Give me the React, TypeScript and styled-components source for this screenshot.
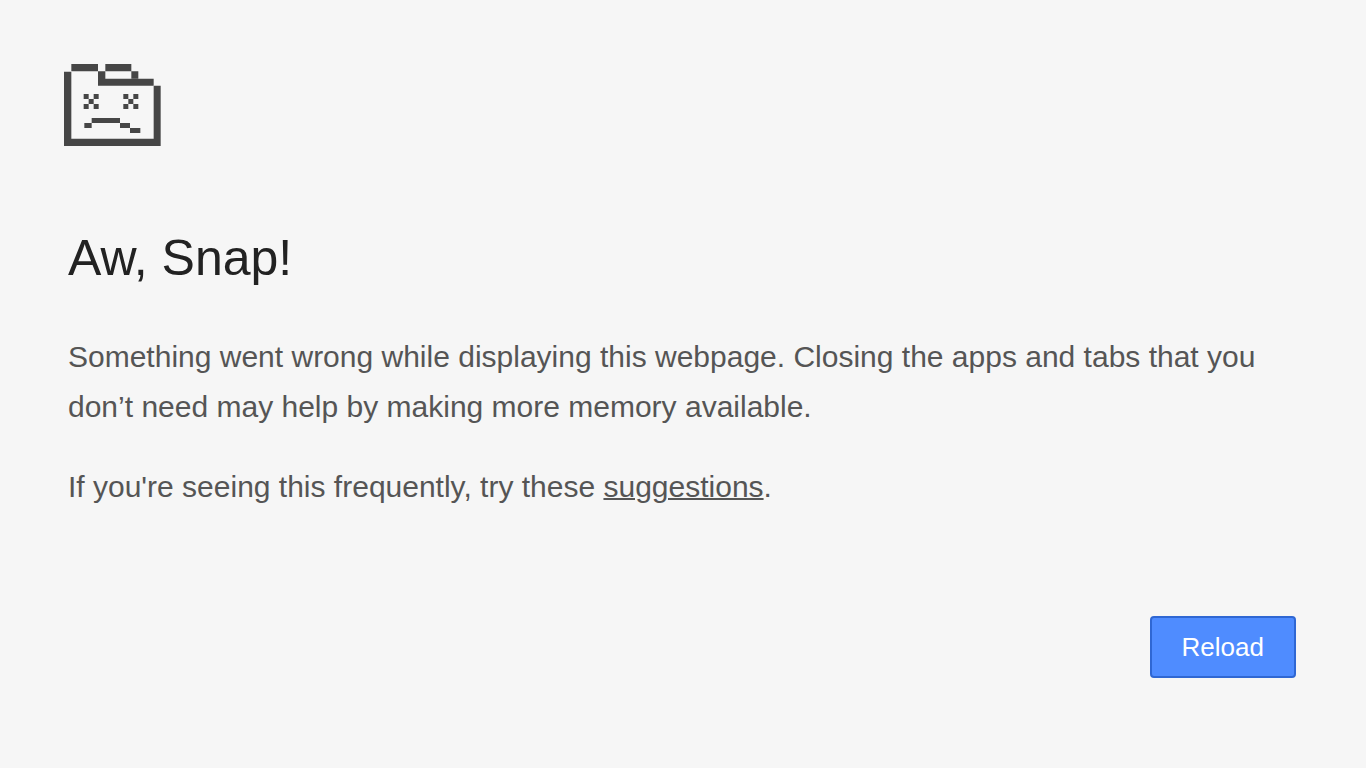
import React from 'react';
import styled, { createGlobalStyle } from 'styled-components';

const GlobalStyle = createGlobalStyle`
  *, *::before, *::after { box-sizing: border-box; }
  body {
    margin: 0;
    background: #f6f6f6;
    color: #555;
    font-family: "Liberation Sans", Arial, Helvetica, sans-serif;
  }
`;

const Page = styled.main`
  padding: 64px 70px 64px 64px;
`;

const Icon = styled.svg`
  display: block;
  width: 97px;
  height: 82px;
  margin-bottom: 80px;
  fill: #464646;
`;

const Message = styled.section`
  padding-left: 4px;
`;

const Title = styled.h1`
  margin: 0 0 42px;
  color: #222;
  font-size: 50px;
  font-weight: 400;
  line-height: 64px;
`;

const Paragraph = styled.p`
  margin: 0 0 30px;
  font-size: 30px;
  line-height: 50px;
`;

const Suggestions = styled.a`
  color: inherit;
  text-decoration: underline;
  text-decoration-thickness: 2px;
`;

const Actions = styled.div`
  display: flex;
  justify-content: flex-end;
  padding-top: 74px;
`;

const ReloadButton = styled.button`
  height: 62px;
  padding: 0 30px;
  border: 2px solid #2f67d3;
  border-radius: 4px;
  background: #4f8cff;
  color: #fff;
  font-family: inherit;
  font-size: 26px;
  line-height: 32px;
  cursor: pointer;
`;

function SadFolder() {
  return (
    <Icon viewBox="24 23 291 246" role="img" aria-label="Crashed tab">
      <path d="M46 23h80v22h-80zM148 23h78v22h-78zM226 45h21v22h-21z" />
      <path d="M126 45h22v22h145v21h-167z" />
      <path d="M24 46h22v201h247v-159h21v181h-290z" />
      <path d="M83 113h15v15h-15zM113 113h15v15h-15zM98 128h15v15h-15zM83 143h15v15h-15zM113 143h15v15h-15z" />
      <path d="M202 113h15v15h-15zM232 113h15v15h-15zM217 128h15v15h-15zM202 143h15v15h-15zM232 143h15v15h-15z" />
      <path d="M107 185h85v15h-85zM85 200h22v15h-22zM192 200h30v15h-30zM222 215h31v15h-31z" />
    </Icon>
  );
}

export default function App() {
  return (
    <>
      <GlobalStyle />
      <Page>
        <SadFolder />
        <Message>
          <Title>Aw, Snap!</Title>
          <Paragraph>
            Something went wrong while displaying this webpage. Closing the apps and tabs that you
            don’t need may help by making more memory available.
          </Paragraph>
          <Paragraph>
            If you're seeing this frequently, try these <Suggestions href="#suggestions">suggestions</Suggestions>.
          </Paragraph>
        </Message>
        <Actions>
          <ReloadButton type="button" onClick={() => window.location.reload()}>Reload</ReloadButton>
        </Actions>
      </Page>
    </>
  );
}
